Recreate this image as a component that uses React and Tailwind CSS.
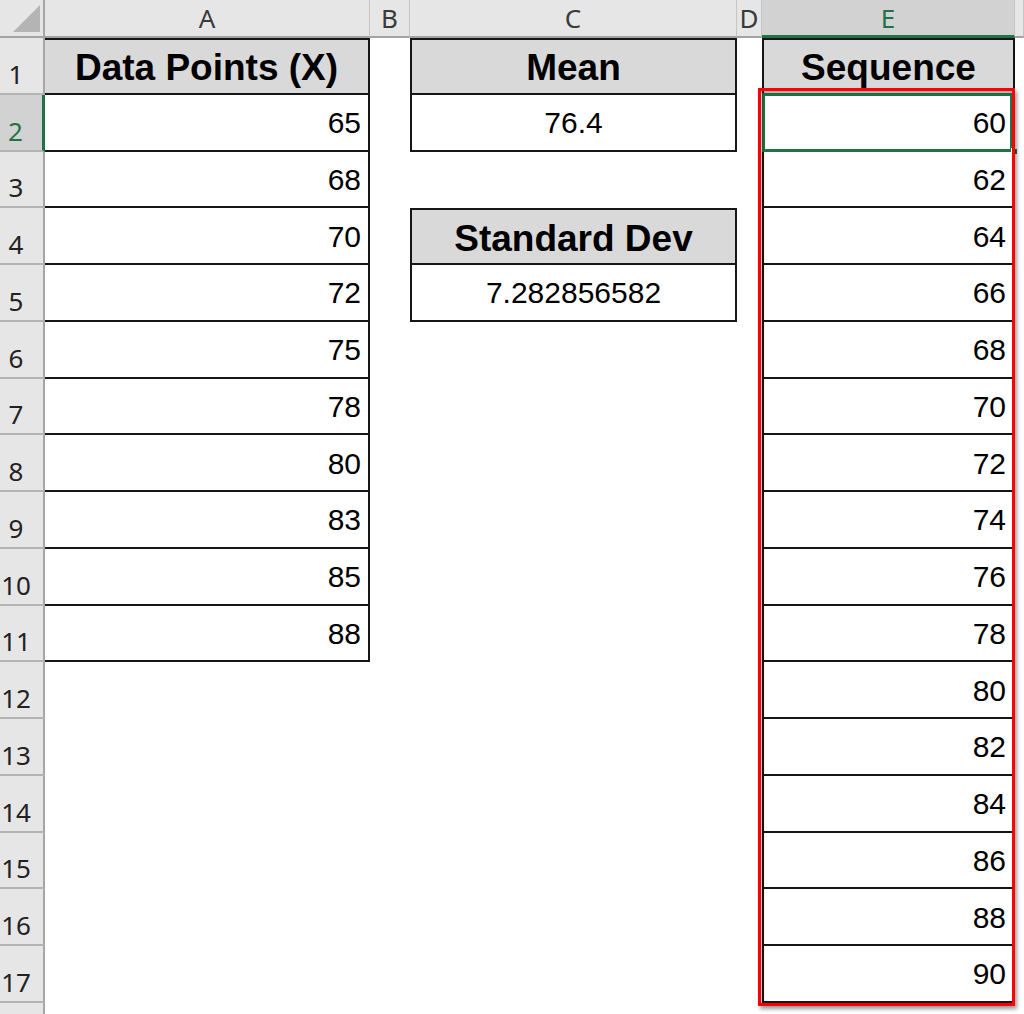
import React from 'react';

const dataX = [65, 68, 70, 72, 75, 78, 80, 83, 85, 88];
const sequence = Array.from({ length: 16 }, (_, i) => 60 + i * 2);

const sans = "font-['Liberation_Sans',Arial,sans-serif]";
const ui = "font-['Noto_Sans','Open_Sans',sans-serif]";

// header cell of a small table (grey, bold, centered)
const HeadCell = ({ children, left }) => (
  <div
    className={`${sans} flex items-center justify-center pt-[3px] bg-[#d9d9d9] border-t-2 border-r-2 border-b-2 border-[#161616] text-[37px] font-bold text-black leading-none ${left ? 'border-l-2' : ''}`}
  >
    {children}
  </div>
);

const ValueCell = ({ children, left, center, className = '' }) => (
  <div
    className={`${sans} relative flex items-center pt-[2px] bg-white border-r-2 border-b-2 border-[#161616] text-[30px] text-black leading-none ${center ? 'justify-center' : 'justify-end pr-[7px]'} ${left ? 'border-l-2' : ''} ${className}`}
  >
    {children}
  </div>
);

const Empty = () => <div className="bg-white" />;

const ColHead = ({ label, active }) => (
  <div
    className={`${ui} flex items-center justify-center text-[26px] leading-none border-r border-[#c4c4c4] ${
      active ? 'bg-[#d2d2d2] text-[#217346] border-b-[3px] border-b-[#217346]' : 'bg-[#e6e6e6] text-[#3a3a3a] border-b-2 border-b-[#a3a3a3]'
    }`}
  >
    {label}
  </div>
);

const RowHead = ({ n, active }) => (
  <div
    className={`${ui} flex items-end justify-center pr-[11px] pb-[6px] text-[26px] leading-none border-b-2 border-b-[#b4b4b4] ${
      active ? 'bg-[#d2d2d2] text-[#217346] border-r-[3px] border-r-[#217346]' : 'bg-[#e6e6e6] text-[#222] border-r-2 border-r-[#a6a6a6]'
    }`}
  >
    {n}
  </div>
);

function cellA(r) {
  if (r === 1) return <HeadCell>Data Points (X)</HeadCell>;
  if (r <= 11) return <ValueCell>{dataX[r - 2]}</ValueCell>;
  return <Empty />;
}

function cellC(r) {
  if (r === 1) return <HeadCell left>Mean</HeadCell>;
  if (r === 2) return <ValueCell left center>76.4</ValueCell>;
  if (r === 4) return <HeadCell left>Standard Dev</HeadCell>;
  if (r === 5) return <ValueCell left center>7.282856582</ValueCell>;
  return <Empty />;
}

function cellE(r) {
  if (r === 1) return <HeadCell left>Sequence</HeadCell>;
  if (r === 2) {
    return (
      <ValueCell left className="z-10">
        {sequence[0]}
        {/* active cell selection */}
        <div className="absolute -top-[2px] -left-[2px] right-0 -bottom-[2px] border-[3px] border-[#217346] pointer-events-none" />
        <div className="absolute -right-[5px] -bottom-[5px] w-[7px] h-[7px] bg-[#217346] border border-white" />
        {/* highlighted range */}
        <div className="absolute -top-[7px] -left-[6px] -right-[2px] h-[918px] border-[3px] border-[#ff0000] shadow-[2px_3px_4px_rgba(0,0,0,0.4),inset_2px_2px_3px_rgba(0,0,0,0.25)] pointer-events-none z-20" />
      </ValueCell>
    );
  }
  return <ValueCell left>{sequence[r - 2]}</ValueCell>;
}

export default function App() {
  const rows = Array.from({ length: 17 }, (_, i) => i + 1);

  return (
    <div className="w-[1024px] h-[1014px] overflow-hidden bg-white">
      <div className="grid h-full grid-cols-[45px_325px_40px_327px_25px_253px_1fr] grid-rows-[38px_repeat(17,56.76px)_1fr]">
        {/* column headers */}
        <div className="relative bg-[#e6e6e6] border-r-2 border-r-[#a6a6a6] border-b-2 border-b-[#a3a3a3]">
          <svg className="absolute left-0 top-0" width="45" height="38" viewBox="0 0 45 38">
            <polygon points="40,5 40,32 13,32" fill="#b4b4b4" />
          </svg>
        </div>
        <ColHead label="A" />
        <ColHead label="B" />
        <ColHead label="C" />
        <ColHead label="D" />
        <ColHead label="E" active />
        <ColHead label="" />

        {rows.map((r) => (
          <React.Fragment key={r}>
            <RowHead n={r} active={r === 2} />
            {cellA(r)}
            <Empty />
            {cellC(r)}
            <Empty />
            {cellE(r)}
            <Empty />
          </React.Fragment>
        ))}

        {/* partially visible row 18 */}
        <div className="bg-[#e6e6e6] border-r-2 border-r-[#a6a6a6]" />
      </div>
    </div>
  );
}
